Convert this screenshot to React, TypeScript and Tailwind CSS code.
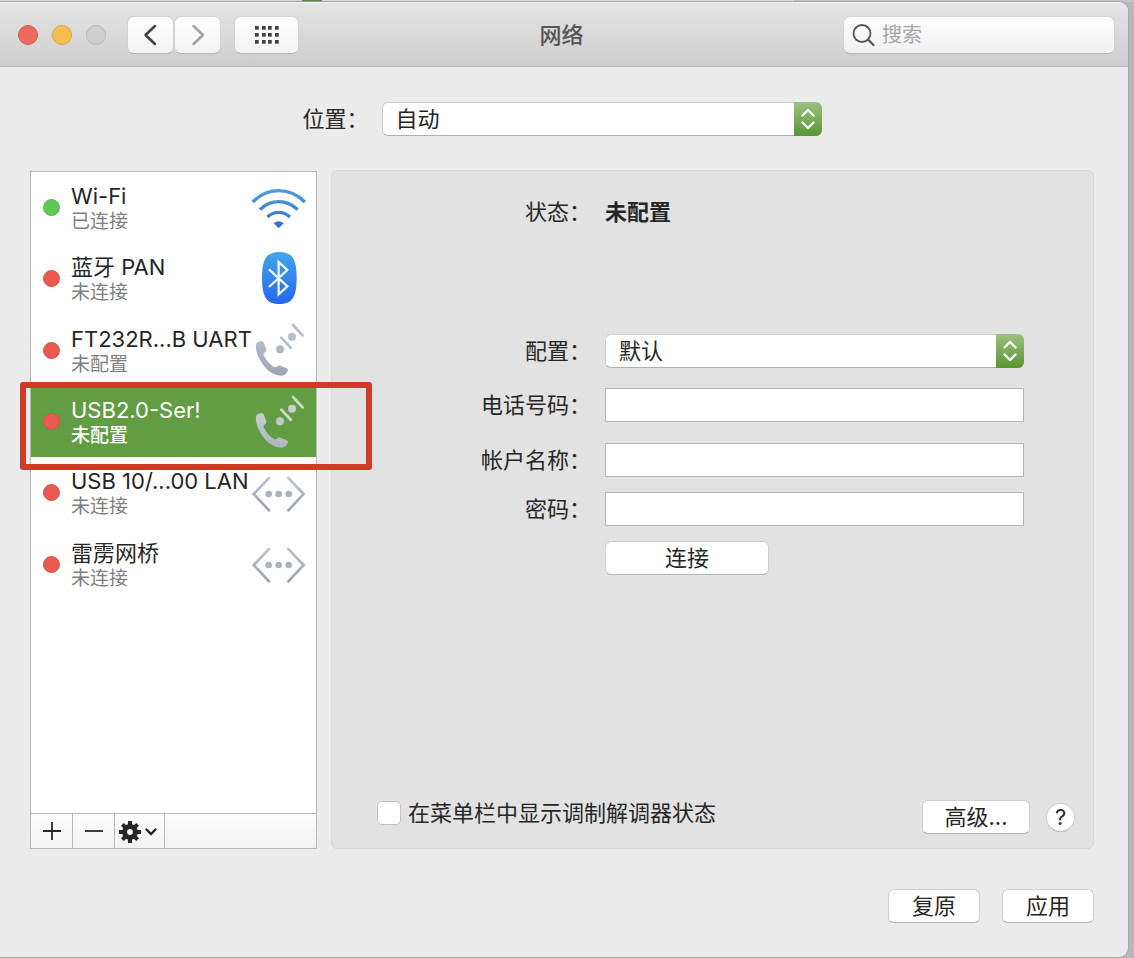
import { useState, type ReactNode } from 'react';

function WifiIcon() {
  return (
    <svg viewBox="30 29 168 168" className="size-14" aria-hidden="true">
      <defs>
        <linearGradient id="wifi" gradientUnits="userSpaceOnUse" x1="0" y1="56" x2="0" y2="172">
          <stop offset="0" stopColor="#4f9fdb" />
          <stop offset="1" stopColor="#3570c8" />
        </linearGradient>
      </defs>
      <g fill="none" stroke="url(#wifi)" strokeWidth="10">
        <path d="M38 95Q72 61 116 61T195 95" />
        <path d="M60 118Q84 94 116 94T173 118" />
        <path d="M82 140Q97 126 116 126T150 140" />
      </g>
      <path d="M101 159Q116 146 131 159L116 174Z" fill="#3873ca" />
    </svg>
  );
}

function BluetoothIcon() {
  return (
    <svg viewBox="30 243 168 168" className="size-14" aria-hidden="true">
      <defs>
        <linearGradient id="bt" x1="0" y1="0" x2="0" y2="1">
          <stop offset="0" stopColor="#43a5ea" />
          <stop offset="1" stopColor="#2467ee" />
        </linearGradient>
      </defs>
      <path
        d="M118 246C153 246 170 262 170 324S153 402 118 402S66 386 66 324S83 246 118 246Z"
        fill="url(#bt)"
      />
      <path
        d="M87 298L142 349L116 373V276L142 300L87 351"
        fill="none"
        stroke="#eef4fd"
        strokeWidth="7"
        strokeLinejoin="miter"
      />
    </svg>
  );
}

function ModemIcon({ id, light }: { id: string; light?: boolean }) {
  const fill = `url(#${id})`;
  return (
    <svg viewBox="30 37 168 168" className="size-14" aria-hidden="true">
      <defs>
        <linearGradient id={id} gradientUnits="userSpaceOnUse" x1="0" y1="40" x2="0" y2="200">
          <stop offset="0" stopColor={light ? '#d3dbd6' : '#c3c8cf'} />
          <stop offset="1" stopColor={light ? '#abb5c0' : '#9ba5b7'} />
        </linearGradient>
      </defs>
      <path
        d="M50 100C54 96 60 94 66 95C70 96 71 98 72 101L78 116C80 122 78 126 73 129C70 131 70 134 72 138C80 154 91 166 103 172C107 174 110 173 112 170C115 167 119 166 124 169L140 176C144 178 145 181 143 185C140 193 133 198 124 198C96 198 68 172 55 141C48 124 45 107 50 100Z"
        fill={fill}
      />
      <circle cx="120" cy="119" r="12" fill={fill} />
      <circle cx="156" cy="81" r="12" fill={fill} />
      <path
        d="M124 84L153 115M159 46L188 77"
        stroke={light ? '#d0d9d2' : '#b9bfc8'}
        strokeWidth="8"
        strokeLinecap="round"
      />
    </svg>
  );
}

function EthernetIcon({ id }: { id: string }) {
  return (
    <svg viewBox="30 15 168 168" className="size-14" aria-hidden="true">
      <defs>
        <linearGradient id={id} gradientUnits="userSpaceOnUse" x1="0" y1="50" x2="0" y2="155">
          <stop offset="0" stopColor="#c0c4cb" />
          <stop offset="1" stopColor="#98a1b1" />
        </linearGradient>
      </defs>
      <path
        d="M87 54L41 102L87 151M145 54L191 102L145 151"
        fill="none"
        stroke={`url(#${id})`}
        strokeWidth="8"
        strokeLinecap="round"
      />
      <g fill="#a9b2c2">
        <circle cx="86" cy="102" r="10" />
        <circle cx="116" cy="102" r="10" />
        <circle cx="146" cy="102" r="10" />
      </g>
    </svg>
  );
}

function GearIcon() {
  return (
    <svg viewBox="-12 -12 24 24" className="size-6" aria-hidden="true">
      <g stroke="#262626" strokeWidth="4">
        <path d="M0 -11V-5M0 11V5M-11 0H-5M11 0H5" />
        <path d="M-7.6 -7.6L-4 -4M7.6 7.6L4 4M-7.6 7.6L-4 4M7.6 -7.6L4 -4" />
      </g>
      <circle r="5.4" fill="none" stroke="#262626" strokeWidth="5" />
    </svg>
  );
}

type Service = { name: string; status: string; connected?: boolean; icon: ReactNode };

const services: Service[] = [
  { name: 'Wi-Fi', status: '已连接', connected: true, icon: <WifiIcon /> },
  { name: '蓝牙 PAN', status: '未连接', icon: <BluetoothIcon /> },
  { name: 'FT232R...B UART', status: '未配置', icon: <ModemIcon id="modem-a" /> },
  { name: 'USB2.0-Ser!', status: '未配置', icon: <ModemIcon id="modem-b" light /> },
  { name: 'USB 10/...00 LAN', status: '未连接', icon: <EthernetIcon id="eth-a" /> },
  { name: '雷雳网桥', status: '未连接', icon: <EthernetIcon id="eth-b" /> },
];

const highlighted = 3;

function Popup({ id, options }: { id: string; options: string[] }) {
  return (
    <div className="relative w-full">
      <select
        id={id}
        className="block h-[34px] w-full appearance-none rounded-[6px] border border-[#cdcdcd] border-b-[#b0b0b0] bg-white pr-9 pl-[13px] text-[22px] leading-[30px] text-[#262626]"
      >
        {options.map((o) => (
          <option key={o}>{o}</option>
        ))}
      </select>
      <span className="pointer-events-none absolute inset-y-0 right-0 flex w-7 items-center justify-center rounded-r-[6px] bg-linear-to-b from-[#9cc17f] to-[#589630]">
        <svg viewBox="0 0 28 34" className="h-[34px] w-7" aria-hidden="true">
          <path
            d="M8.500 13.500L14 8L19.500 13.500M8.500 20.500L14 26L19.500 20.500"
            fill="none"
            stroke="#fff"
            strokeWidth="2.400"
            strokeLinecap="round"
            strokeLinejoin="round"
          />
        </svg>
      </span>
    </div>
  );
}

function PushButton({ children, className }: { children: ReactNode; className: string }) {
  return (
    <button
      type="button"
      className={`flex h-[34px] items-center justify-center rounded-[6px] border border-[#cfcfcf] border-b-[#b4b4b4] bg-white text-[22px] leading-[30px] text-[#262626] ${className}`}
    >
      {children}
    </button>
  );
}

function FormRow({ label, htmlFor, className, children }: { label: string; htmlFor?: string; className: string; children: ReactNode }) {
  return (
    <div className={`grid grid-cols-[260px_1fr] items-center gap-[14px] ${className}`}>
      {htmlFor ? (
        <label htmlFor={htmlFor} className="text-right">
          {label}
        </label>
      ) : (
        <span className="text-right">{label}</span>
      )}
      {children}
    </div>
  );
}

const fieldClass = 'h-[34px] w-full border border-[#b5b5b5] bg-white px-2 text-[20px]';
const toolClass =
  'flex h-[38px] items-center justify-center rounded-[7px] border border-[#d2d2d2] border-b-[#b3b3b3] bg-linear-to-b from-[#fdfdfd] to-[#f3f3f3]';

export default function App() {
  const [selected, setSelected] = useState(3);

  return (
    <div
      lang="zh-CN"
      className="flex min-h-screen flex-col bg-[#b7b8bc] pb-px font-['Inter','Noto_Sans_CJK_SC',sans-serif] text-[22px] leading-[34px] text-[#262626]"
    >
      <div className="flex h-[2px]">
        <div className="w-[302px] bg-[#d9d9d9]" />
        <div className="w-5 bg-[#4d8527]" />
        <div className="w-[472px] bg-[#dedede]" />
        <div className="flex-1 bg-[#c2c5ca]" />
      </div>
      <div className="mr-[6px] flex flex-1 flex-col rounded-r-[9px] bg-[#ebebeb] shadow-[0_0_1px_1px_#a4a5a9]">
        <header className="grid h-[65px] grid-cols-[1fr_auto_1fr] items-center rounded-tr-[9px] border-t border-b border-t-[#efefef] border-b-[#aeaeae] bg-linear-to-b from-[#e5e5e5] to-[#cdcdcd] pr-[13px] pl-2">
          <div className="flex items-center pl-[10px]">
            <div className="flex gap-[14px]">
              <button type="button" aria-label="关闭" className="size-5 rounded-full border border-[#d3584f] bg-[#ed6a5f]" />
              <button type="button" aria-label="最小化" className="size-5 rounded-full border border-[#d9a43f] bg-[#f5bf4f]" />
              <button type="button" aria-label="缩放" className="size-5 rounded-full border border-[#b4b4b4] bg-[#cfcfcf]" />
            </div>
            <button type="button" aria-label="后退" className={`${toolClass} ml-[21px] w-[47px]`}>
              <svg viewBox="0 0 24 24" className="size-6" aria-hidden="true">
                <path d="M16 3L6.500 12L16 21" fill="none" stroke="#404040" strokeWidth="2.500" strokeLinecap="round" strokeLinejoin="round" />
              </svg>
            </button>
            <button type="button" aria-label="前进" className={`${toolClass} w-[47px]`}>
              <svg viewBox="0 0 24 24" className="size-6" aria-hidden="true">
                <path d="M7.500 3L17 12L7.500 21" fill="none" stroke="#a3a3a3" strokeWidth="2.500" strokeLinecap="round" strokeLinejoin="round" />
              </svg>
            </button>
            <button type="button" aria-label="显示全部" className={`${toolClass} ml-[13px] w-[65px]`}>
              <svg viewBox="0 0 26 20" className="h-5 w-[26px]" fill="#404040" aria-hidden="true">
                {[1, 8, 15].map((y) =>
                  [1, 8, 14, 21].map((x) => <rect key={`${x}-${y}`} x={x} y={y} width="3.700" height="3.700" />),
                )}
              </svg>
            </button>
          </div>
          <h1 className="text-[22px] font-medium text-[#555]">网络</h1>
          <label className="flex h-[38px] w-[272px] items-center justify-self-end rounded-[7px] border border-[#d2d2d2] border-b-[#b3b3b3] bg-linear-to-b from-[#fdfdfd] to-[#f1f1f1] pl-2">
            <svg viewBox="0 0 24 24" className="size-6 shrink-0" aria-hidden="true">
              <circle cx="10" cy="10.500" r="8.500" fill="none" stroke="#555" strokeWidth="1.800" />
              <path d="M16 16.500L21.500 22" stroke="#555" strokeWidth="2.200" strokeLinecap="round" />
            </svg>
            <input
              type="search"
              aria-label="搜索"
              placeholder="搜索"
              className="ml-[6px] w-full min-w-0 bg-transparent text-[20px] leading-7 outline-none placeholder:text-[#a5a5a5]"
            />
          </label>
        </header>

        <div className="flex flex-1 flex-col pt-[35px] pr-[34px] pb-[34px] pl-[30px]">
          <div className="flex items-center justify-center gap-[13px]">
            <label htmlFor="location">位置：</label>
            <div className="w-[440px]">
              <Popup id="location" options={['自动']} />
            </div>
          </div>

          <main className="mt-[34px] flex flex-1 gap-[14px]">
            <section className="mt-px flex w-[287px] shrink-0 flex-col border border-[#b8b8b8] bg-white">
              <ul className="grid h-[428px] grid-cols-1 grid-rows-6">
                {services.map((s, i) => {
                  const active = i === selected;
                  return (
                    <li key={s.name} className={`relative ${active ? 'bg-[#629d43]' : ''}`}>
                      <button
                        type="button"
                        onClick={() => setSelected(i)}
                        className="flex h-full w-full items-center pr-[10px] pl-3 text-left"
                      >
                        <span
                          className={`mr-[11px] size-[17px] shrink-0 rounded-full border ${
                            s.connected ? 'border-[#57b94b] bg-[#61c654]' : 'border-[#d9534a] bg-[#ea594f]'
                          }`}
                        />
                        <span className="min-w-0 flex-1 pt-[3px] whitespace-nowrap">
                          <span className={`block text-[22px] leading-[26px] ${active ? 'text-white' : ''}`}>{s.name}</span>
                          <span
                            className={`block text-[19px] leading-[26px] ${active ? 'font-medium text-white' : 'text-[#808080]'}`}
                          >
                            {s.status}
                          </span>
                        </span>
                        <span className="shrink-0">{s.icon}</span>
                      </button>
                      {i === highlighted && (
                        <span className="pointer-events-none absolute -top-1 -left-[11px] z-10 h-[88px] w-[352px] rounded-[3px] border-[6px] border-[#d23a28]" />
                      )}
                    </li>
                  );
                })}
              </ul>
              <div className="mt-auto flex h-[35px] border-t border-[#b8b8b8] bg-linear-to-b from-[#fbfbfb] to-[#f3f3f3]">
                <button type="button" aria-label="添加" className="flex w-[42px] items-center justify-center border-r border-[#b8b8b8]">
                  <svg viewBox="0 0 20 20" className="size-5" aria-hidden="true">
                    <path d="M10 1V19M1 10H19" stroke="#262626" strokeWidth="1.800" />
                  </svg>
                </button>
                <button type="button" aria-label="移除" className="flex w-[42px] items-center justify-center border-r border-[#b8b8b8]">
                  <svg viewBox="0 0 20 20" className="size-5" aria-hidden="true">
                    <path d="M1 10H19" stroke="#262626" strokeWidth="1.800" />
                  </svg>
                </button>
                <button type="button" aria-label="操作" className="flex w-[50px] items-center justify-center gap-[2px] border-r border-[#b8b8b8] pt-px pr-[3px]">
                  <GearIcon />
                  <svg viewBox="0 0 14 10" className="h-[10px] w-[14px]" aria-hidden="true">
                    <path d="M2.500 2.500L7 7L11.500 2.500" fill="none" stroke="#262626" strokeWidth="2.400" strokeLinecap="round" />
                  </svg>
                </button>
              </div>
            </section>

            <section className="flex flex-1 flex-col rounded-[6px] border border-[#d9d9d9] bg-[#e2e2e2] pt-6 pb-[14px]">
              <div className="-ml-px pr-[69px]">
                <FormRow label="状态：" className="">
                  <strong className="font-bold">未配置</strong>
                </FormRow>
                <FormRow label="配置：" htmlFor="config" className="mt-[105px]">
                  <Popup id="config" options={['默认']} />
                </FormRow>
                <FormRow label="电话号码：" htmlFor="phone" className="mt-5">
                  <input id="phone" type="tel" className={fieldClass} />
                </FormRow>
                <FormRow label="帐户名称：" htmlFor="account" className="mt-[21px]">
                  <input id="account" type="text" className={fieldClass} />
                </FormRow>
                <FormRow label="密码：" htmlFor="password" className="mt-[15px]">
                  <input id="password" type="password" className={fieldClass} />
                </FormRow>
                <FormRow label="" className="mt-[15px]">
                  <PushButton className="w-[164px]">连接</PushButton>
                </FormRow>
              </div>
              <div className="mt-auto flex items-center pr-[18px] pl-[45px]">
                <label className="mb-2 flex items-center gap-[7px] leading-[26px]">
                  <input
                    type="checkbox"
                    className="size-6 appearance-none rounded-[5px] border border-[#c4c4c4] bg-white checked:bg-[#629d43]"
                  />
                  在菜单栏中显示调制解调器状态
                </label>
                <PushButton className="mr-4 ml-auto w-[108px]">高级...</PushButton>
                <button
                  type="button"
                  aria-label="帮助"
                  className="flex size-[29px] items-center justify-center rounded-full border border-[#cfcfcf] border-b-[#b4b4b4] bg-white text-[22px] leading-7"
                >
                  ?
                </button>
              </div>
            </section>
          </main>

          <footer className="mt-10 flex justify-end gap-[22px]">
            <PushButton className="w-[92px]">复原</PushButton>
            <PushButton className="w-[92px]">应用</PushButton>
          </footer>
        </div>
      </div>
    </div>
  );
}
